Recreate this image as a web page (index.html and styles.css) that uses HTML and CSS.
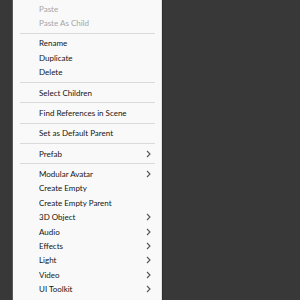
FILE: index.html
```html
<!DOCTYPE html>
<html lang="en">
<head>
    <meta charset="UTF-8">
    <meta name="viewport" content="width=device-width, initial-scale=1.0">
    <title>Hierarchy Context Menu</title>
    <link rel="stylesheet" href="styles.css">
</head>
<body>
    <div class="menu">
        <div class="item disabled">Paste</div>
        <div class="item disabled">Paste As Child</div>
        <div class="sep"></div>
        <div class="item">Rename</div>
        <div class="item">Duplicate</div>
        <div class="item">Delete</div>
        <div class="sep"></div>
        <div class="item">Select Children</div>
        <div class="sep"></div>
        <div class="item">Find References in Scene</div>
        <div class="sep"></div>
        <div class="item">Set as Default Parent</div>
        <div class="sep"></div>
        <div class="item sub">Prefab <svg class="arrow" viewBox="0 0 5 8"><path d="M1 1 L4 4 L1 7"/></svg></div>
        <div class="sep"></div>
        <div class="item sub">Modular Avatar <svg class="arrow" viewBox="0 0 5 8"><path d="M1 1 L4 4 L1 7"/></svg></div>
        <div class="item">Create Empty</div>
        <div class="item">Create Empty Parent</div>
        <div class="item sub">3D Object <svg class="arrow" viewBox="0 0 5 8"><path d="M1 1 L4 4 L1 7"/></svg></div>
        <div class="item sub">Audio <svg class="arrow" viewBox="0 0 5 8"><path d="M1 1 L4 4 L1 7"/></svg></div>
        <div class="item sub">Effects <svg class="arrow" viewBox="0 0 5 8"><path d="M1 1 L4 4 L1 7"/></svg></div>
        <div class="item sub">Light <svg class="arrow" viewBox="0 0 5 8"><path d="M1 1 L4 4 L1 7"/></svg></div>
        <div class="item sub">Video <svg class="arrow" viewBox="0 0 5 8"><path d="M1 1 L4 4 L1 7"/></svg></div>
        <div class="item sub">UI Toolkit <svg class="arrow" viewBox="0 0 5 8"><path d="M1 1 L4 4 L1 7"/></svg></div>
    </div>
</body>
</html>
```

FILE: styles.css
```css
html, body {
    margin: 0;
    padding: 0;
    height: 100%;
    overflow: hidden;
    background-color: #383838;
}
body {
    font-family: Lato, "Noto Sans", sans-serif;
    font-size: 8px;
}
.menu {
    margin-left: 12px;
    width: 150px;
    padding-top: 1.5px;
    height: 100%;
    box-sizing: border-box;
    background-color: #f9f9f9;
    border-left: 1px solid #5a5a5a;
    border-right: 1px solid #e0e0e0;
    box-shadow: 1px 0 0 #2c2c2c;
}
.item {
    height: 14.375px;
    padding-left: 26px;
    padding-right: 10px;
    color: #151515;
    white-space: nowrap;
    display: flex;
    align-items: center;
}
.item.disabled {
    color: #a6a6a6;
}
.item.sub {
    justify-content: space-between;
}
.arrow {
    width: 5px;
    height: 8px;
    fill: none;
    stroke: #555;
    stroke-width: 1.1;
}
.sep {
    height: 6px;
    display: flex;
    align-items: center;
    padding: 0 6px 0 7px;
}
.sep::before {
    content: "";
    flex: 1;
    height: 1px;
    background-color: #dadada;
}
```
